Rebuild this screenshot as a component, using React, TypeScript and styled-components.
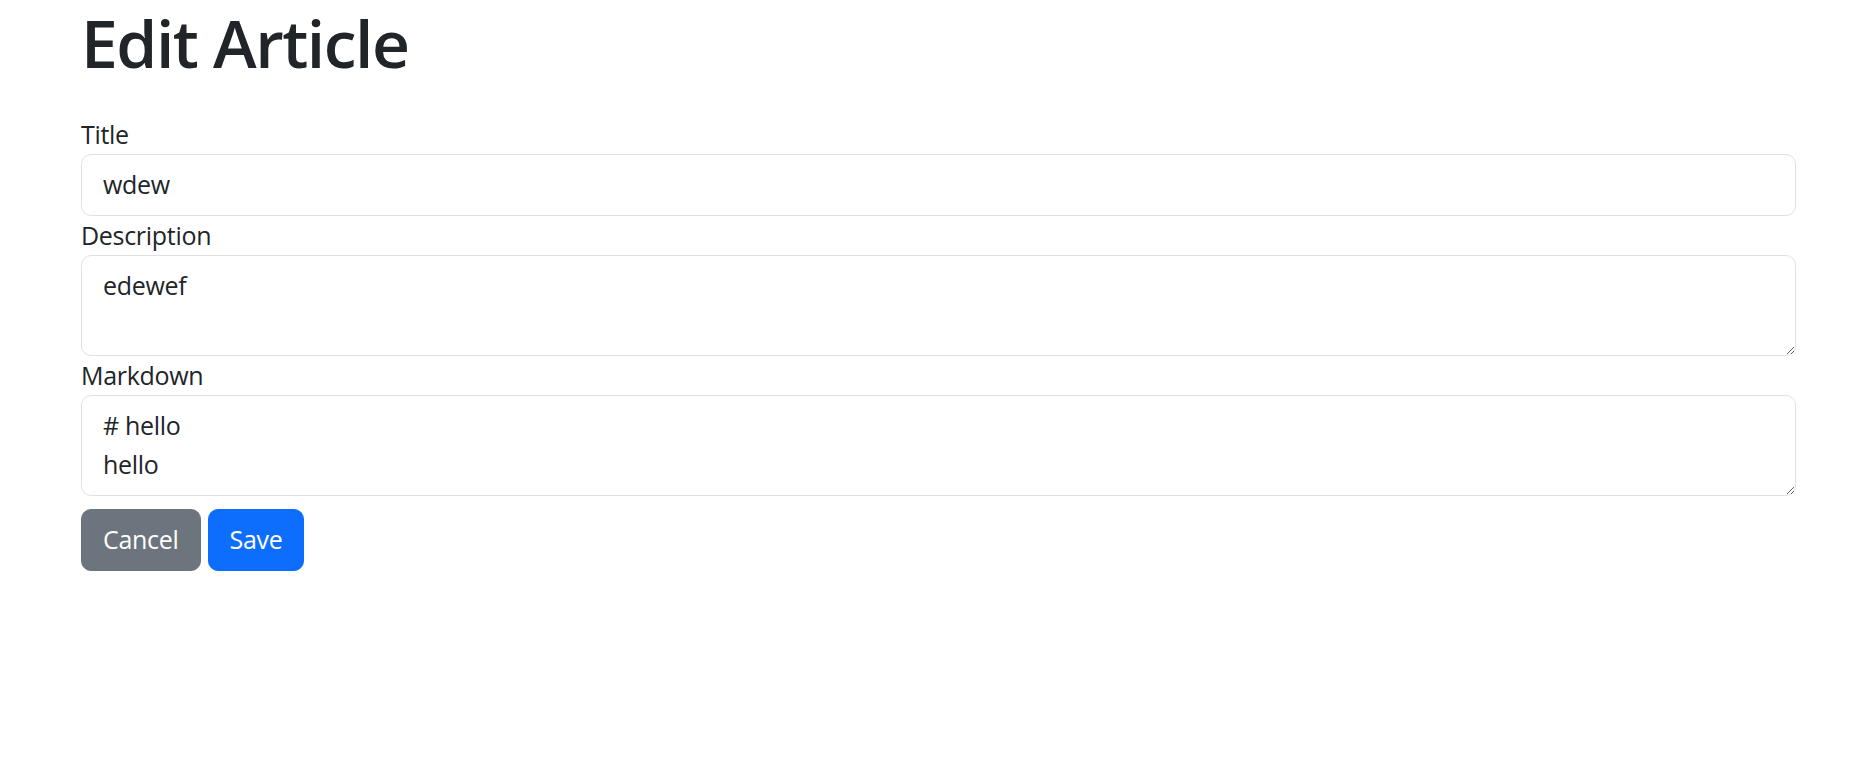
import styled, { createGlobalStyle } from 'styled-components';

const GlobalStyle = createGlobalStyle`
  *, *::before, *::after {
    box-sizing: border-box;
  }

  body {
    margin: 0;
    background-color: #fff;
    color: #212529;
    font-family: "Segoe UI", "Open Sans", "Noto Sans", sans-serif;
    font-size: 25px;
    line-height: 39px;
    letter-spacing: -0.3px;
  }
`;

const Page = styled.main`
  padding: 6px 54px 0 81px;
`;

const Heading = styled.h1`
  margin: 0 0 36px;
  font-size: 66px;
  font-weight: 600;
  line-height: 1.1;
  letter-spacing: -1.5px;
`;

const Form = styled.form`
  display: flex;
  flex-direction: column;
`;

const Label = styled.label`
  display: block;
`;

const Field = styled.input`
  display: block;
  width: 100%;
  padding: 10.5px 21px;
  font: inherit;
  letter-spacing: inherit;
  color: #212529;
  background-color: #fff;
  border: 1px solid #dee2e6;
  border-radius: 10px;
  outline: none;
`;

const Area = styled.textarea`
  display: block;
  width: 100%;
  padding: 10.5px 21px;
  font: inherit;
  letter-spacing: inherit;
  color: #212529;
  background-color: #fff;
  border: 1px solid #dee2e6;
  border-radius: 10px;
  outline: none;
  resize: vertical;
`;

const Actions = styled.div`
  display: flex;
  gap: 7px;
  margin-top: 13px;
`;

const Button = styled.button<{ $variant: 'primary' | 'secondary' }>`
  padding: 10.5px 21px;
  font: inherit;
  letter-spacing: inherit;
  color: #fff;
  background-color: ${(p) => (p.$variant === 'primary' ? '#0d6efd' : '#6c757d')};
  border: 1px solid ${(p) => (p.$variant === 'primary' ? '#0d6efd' : '#6c757d')};
  border-radius: 10px;
  cursor: pointer;
`;

export default function App() {
  return (
    <>
      <GlobalStyle />
      <Page>
        <Heading>Edit Article</Heading>
        <Form onSubmit={(e) => e.preventDefault()}>
          <Label htmlFor="title">Title</Label>
          <Field id="title" type="text" defaultValue="wdew" />
          <Label htmlFor="description">Description</Label>
          <Area id="description" rows={2} defaultValue="edewef" />
          <Label htmlFor="body">Markdown</Label>
          <Area id="body" rows={2} defaultValue={'# hello\nhello'} />
          <Actions>
            <Button type="button" $variant="secondary">Cancel</Button>
            <Button type="submit" $variant="primary">Save</Button>
          </Actions>
        </Form>
      </Page>
    </>
  );
}
